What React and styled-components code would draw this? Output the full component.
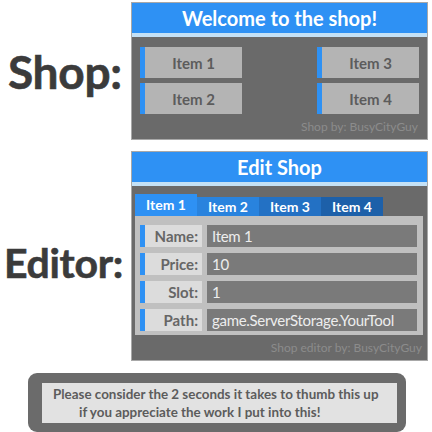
import React from 'react';
import styled, { createGlobalStyle } from 'styled-components';

const GlobalStyle = createGlobalStyle`
  body {
    margin: 0;
    background: #ffffff;
    font-family: Lato, "Open Sans", sans-serif;
  }
`;

const shopItems = [
  ['Item 1', 'Item 2'],
  ['Item 3', 'Item 4'],
];

const tabs = ['Item 1', 'Item 2', 'Item 3', 'Item 4'];
const tabColors = ['#2e91f4', '#2983de', '#2371c4', '#1d60a9'];

const fields = [
  ['Name:', 'Item 1'],
  ['Price:', '10'],
  ['Slot:', '1'],
  ['Path:', 'game.ServerStorage.YourTool'],
];

const App = () => {
  return (
    <React.Fragment>
      <GlobalStyle />
      <Page>
        <Row top={2}>
          <Heading size={46} pad={47} indent={8}>Shop:</Heading>
          <Panel>
            <TitleBar>Welcome to the shop!</TitleBar>
            <ShopBody>
              <ItemGrid>
                {shopItems.map((col, i) => (
                  <ItemColumn key={i}>
                    {col.map((name) => (
                      <ItemButton key={name}>{name}</ItemButton>
                    ))}
                  </ItemColumn>
                ))}
              </ItemGrid>
              <Credit>Shop by: BusyCityGuy</Credit>
            </ShopBody>
          </Panel>
        </Row>

        <Row top={11}>
          <Heading size={41} pad={91} indent={4}>Editor:</Heading>
          <Panel>
            <TitleBar>Edit Shop</TitleBar>
            <EditorBody>
              <TabStrip>
                {tabs.map((name, i) => (
                  <Tab key={name} active={i === 0} color={tabColors[i]}>
                    {name}
                  </Tab>
                ))}
              </TabStrip>
              <FieldBox>
                {fields.map(([label, value]) => (
                  <FieldRow key={label}>
                    <FieldLabel>{label}</FieldLabel>
                    <FieldInput>{value}</FieldInput>
                  </FieldRow>
                ))}
              </FieldBox>
              <Credit>Shop editor by: BusyCityGuy</Credit>
            </EditorBody>
          </Panel>
        </Row>

        <Notice>
          <NoticeInner>
            <NoticeLine>Please consider the 2 seconds it takes to thumb this up</NoticeLine>
            <NoticeLine indent={26}>if you appreciate the work I put into this!</NoticeLine>
          </NoticeInner>
        </Notice>
      </Page>
    </React.Fragment>
  );
};

const Page = styled.div`
  width: 432px;
  height: 432px;
  overflow: hidden;
  display: flex;
  flex-direction: column;
`;

const Row = styled.div`
  display: flex;
  align-items: flex-start;
  margin-top: ${(props) => props.top}px;
`;

const Heading = styled.div`
  width: ${(props) => 131 - props.indent}px;
  padding-left: ${(props) => props.indent}px;
  padding-top: ${(props) => props.pad}px;
  font-size: ${(props) => props.size}px;
  line-height: 1;
  font-weight: 700;
  color: #3b3b3b;
  letter-spacing: -0.3px;
  -webkit-text-stroke: 0.6px #3b3b3b;
`;

const Panel = styled.div`
  width: 295px;
  border: 1px solid #a8a8a8;
  background: #6a6a6a;
  display: flex;
  flex-direction: column;
`;

const TitleBar = styled.div`
  height: 30px;
  background: #2e91f4;
  border-bottom: 4px solid #c4e1f6;
  color: #ffffff;
  font-size: 20px;
  font-weight: 700;
  display: flex;
  align-items: center;
  justify-content: center;
`;

const ShopBody = styled.div`
  padding: 10px 8px 0 8px;
  display: flex;
  flex-direction: column;
`;

const ItemGrid = styled.div`
  display: flex;
  justify-content: space-between;
`;

const ItemColumn = styled.div`
  display: flex;
  flex-direction: column;
  gap: 5px;
`;

const ItemButton = styled.div`
  width: 97px;
  height: 31px;
  background: #b4b4b4;
  border-left: 5px solid #2e91f4;
  color: #5c5c5c;
  font-size: 15px;
  font-weight: 700;
  display: flex;
  align-items: center;
  justify-content: center;
`;

const Credit = styled.div`
  height: 25px;
  display: flex;
  align-items: center;
  justify-content: flex-end;
  padding-right: 1px;
  color: #8c8c8c;
  font-size: 12px;
`;

const EditorBody = styled.div`
  padding: 8px 4px 0 3px;
  display: flex;
  flex-direction: column;
`;

const TabStrip = styled.div`
  display: flex;
  align-items: flex-end;
  height: 22px;
`;

const Tab = styled.div`
  width: 62px;
  height: ${(props) => (props.active ? 22 : 19)}px;
  background: ${(props) => props.color};
  color: #ffffff;
  font-size: 14px;
  font-weight: 700;
  display: flex;
  align-items: ${(props) => (props.active ? 'flex-start' : 'center')};
  padding-top: ${(props) => (props.active ? 2 : 0)}px;
  box-sizing: border-box;
  justify-content: center;
`;

const FieldBox = styled.div`
  background: #c0c0c0;
  padding: 9px 6px 4px 5px;
  display: flex;
  flex-direction: column;
  gap: 6px;
`;

const FieldRow = styled.div`
  display: flex;
  gap: 5px;
  height: 22px;
`;

const FieldLabel = styled.div`
  width: 53px;
  background: #dcdcdc;
  border-left: 5px solid #2e91f4;
  color: #666666;
  font-size: 15px;
  font-weight: 700;
  display: flex;
  align-items: center;
  justify-content: flex-end;
  padding-right: 4px;
`;

const FieldInput = styled.div`
  flex: 1;
  background: #7a7a7a;
  color: #ededed;
  font-size: 15px;
  display: flex;
  align-items: center;
  padding-left: 5px;
  white-space: nowrap;
  overflow: hidden;
  letter-spacing: -0.3px;
`;

const Notice = styled.div`
  margin: 12px 0 0 28px;
  width: 378px;
  height: 70px;
  background: #6b6b6b;
  border-radius: 9px;
  padding: 10px 9px 0 14px;
  box-sizing: border-box;
`;

const NoticeInner = styled.div`
  height: 40px;
  background: #e2e2e2;
  display: flex;
  flex-direction: column;
  justify-content: center;
  padding-left: 11px;
`;

const NoticeLine = styled.div`
  padding-left: ${(props) => props.indent || 0}px;
  color: #5c5c5c;
  font-size: 13.4px;
  font-weight: 700;
  line-height: 18px;
  white-space: nowrap;
`;

export default App;
